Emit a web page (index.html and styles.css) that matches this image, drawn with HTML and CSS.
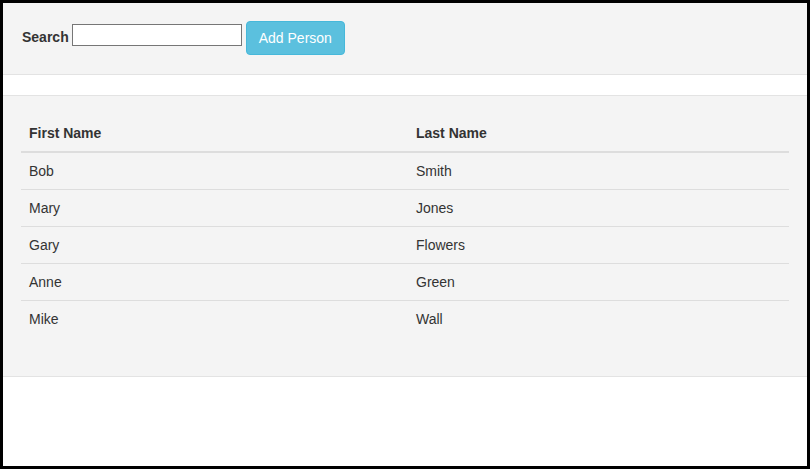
FILE: index.html
```html
<!DOCTYPE html>
<html lang="en">
<head>
    <meta charset="UTF-8">
    <meta name="viewport" content="width=device-width, initial-scale=1.0">
    <link rel="stylesheet" href="styles.css">
    <title>People</title>
</head>
<body>
    <div class="frame">
        <div class="toolbar">
            <label class="search-label" for="search">Search</label>
            <input type="text" id="search" class="search-box">
            <button class="btn-add">Add Person</button>
        </div>

        <div class="list-panel">
            <table class="people">
                <thead>
                    <tr>
                        <th class="col-first">First Name</th>
                        <th>Last Name</th>
                    </tr>
                </thead>
                <tbody>
                    <tr><td>Bob</td><td>Smith</td></tr>
                    <tr><td>Mary</td><td>Jones</td></tr>
                    <tr><td>Gary</td><td>Flowers</td></tr>
                    <tr><td>Anne</td><td>Green</td></tr>
                    <tr><td>Mike</td><td>Wall</td></tr>
                </tbody>
            </table>
        </div>
    </div>
</body>
</html>
```

FILE: styles.css
```css
html, body {
    margin: 0;
    padding: 0;
    height: 100%;
}

body {
    font-family: "Liberation Sans", Arial, sans-serif;
    font-size: 14px;
    line-height: 20px;
    color: #333;
    background-color: white;
}

.frame {
    box-sizing: border-box;
    height: 100%;
    border: 3px solid black;
}

.toolbar {
    display: flex;
    align-items: flex-start;
    gap: 4px;
    background-color: #f4f4f4;
    border-bottom: 1px solid #e3e3e3;
    padding: 18px 19px 19px;
}

.search-label {
    font-weight: bold;
    margin-top: 6px;
    margin-right: -1px;
}

.search-box {
    box-sizing: border-box;
    width: 170px;
    height: 22px;
    border: 1px solid #767676;
    padding: 1px 2px;
    font-family: inherit;
    font-size: 13px;
    margin: 3px 0 0;
}

.btn-add {
    font-family: inherit;
    font-size: 14px;
    line-height: 20px;
    padding: 6px 12px;
    color: white;
    background-color: #5bc0de;
    border: 1px solid #46b8da;
    border-radius: 4px;
    margin: 0;
    cursor: pointer;
}

.list-panel {
    margin-top: 20px;
    background-color: #f4f4f4;
    border-top: 1px solid #e3e3e3;
    border-bottom: 1px solid #e3e3e3;
    padding: 19px 18px;
}

.people {
    width: 100%;
    border-collapse: collapse;
    margin-bottom: 20px;
}

.people th,
.people td {
    text-align: left;
    padding: 8px;
    line-height: 20px;
}

.people th {
    font-weight: bold;
    border-bottom: 2px solid #ddd;
}

.people td {
    border-top: 1px solid #ddd;
}

.people tbody tr:first-child td {
    border-top: none;
}

.col-first {
    width: 371px;
}
```
